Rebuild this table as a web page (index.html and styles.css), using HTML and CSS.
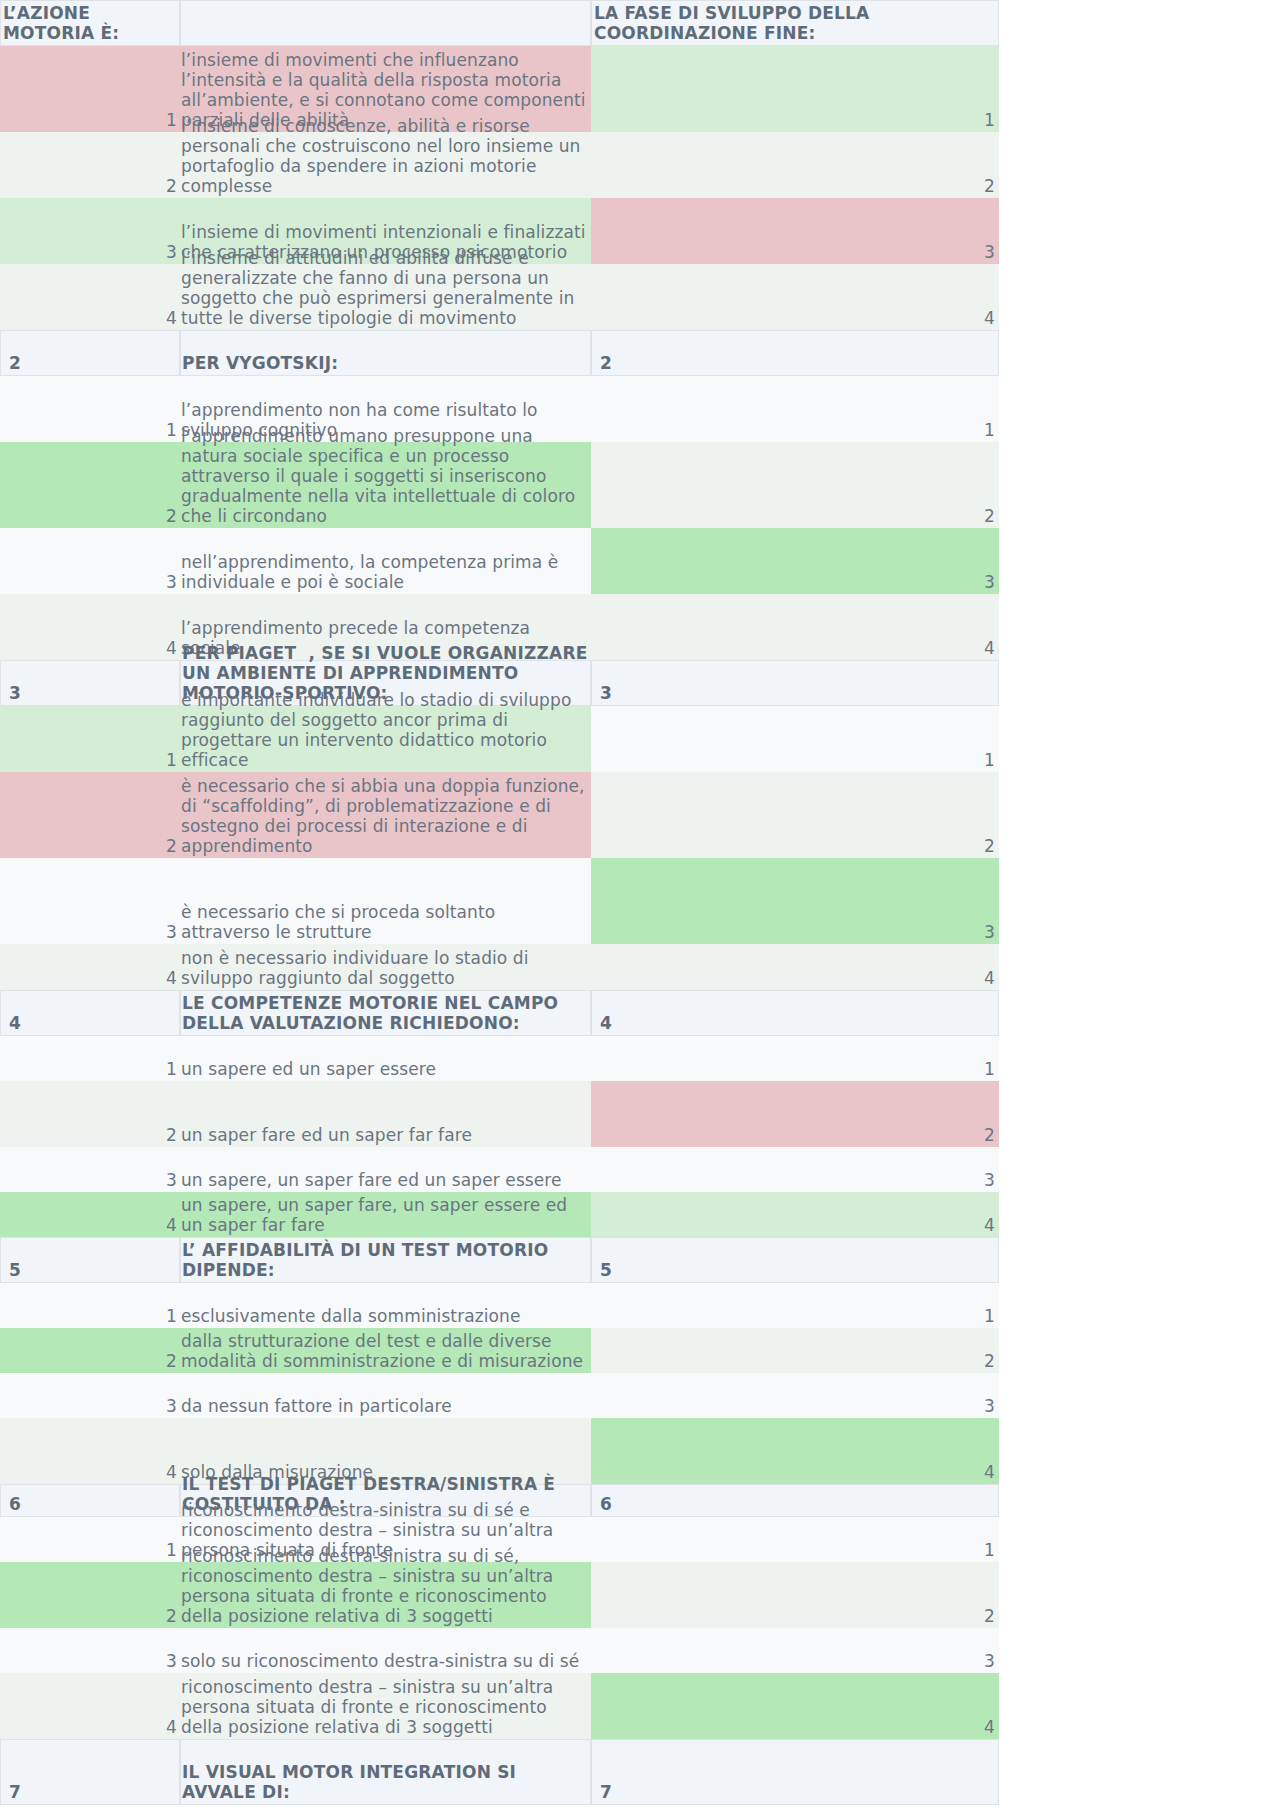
FILE: index.html
```html
<!DOCTYPE html>
<html lang="it">
<head>
<meta charset="utf-8">
<title>Quiz</title>
<link rel="stylesheet" href="styles.css">
</head>
<body>
<div class="sheet">

  <div class="row head h46">
    <div class="cell c1"><div>L’AZIONE MOTORIA È:</div></div>
    <div class="cell c2"><div></div></div>
    <div class="cell c3"><div>LA FASE DI SVILUPPO DELLA COORDINAZIONE FINE:</div></div>
  </div>
  <div class="row odd h86">
    <div class="cell c1 num red"><div>1</div></div>
    <div class="cell c2 txt red"><div>l’insieme di movimenti che influenzano l’intensità e la qualità della risposta motoria all’ambiente, e si connotano come componenti parziali delle abilità</div></div>
    <div class="cell c3 end lgreen"><div>1</div></div>
  </div>
  <div class="row even h66">
    <div class="cell c1 num"><div>2</div></div>
    <div class="cell c2 txt"><div>l’insieme di conoscenze, abilità e risorse personali che costruiscono nel loro insieme un portafoglio da spendere in azioni motorie complesse</div></div>
    <div class="cell c3 end"><div>2</div></div>
  </div>
  <div class="row odd h66">
    <div class="cell c1 num lgreen"><div>3</div></div>
    <div class="cell c2 txt lgreen"><div>l’insieme di movimenti intenzionali e finalizzati che caratterizzano un processo psicomotorio</div></div>
    <div class="cell c3 end red"><div>3</div></div>
  </div>
  <div class="row even h66">
    <div class="cell c1 num"><div>4</div></div>
    <div class="cell c2 txt"><div>l’insieme di attitudini ed abilità diffuse e generalizzate che fanno di una persona un soggetto che può esprimersi generalmente in tutte le diverse tipologie di movimento</div></div>
    <div class="cell c3 end"><div>4</div></div>
  </div>

  <div class="row head h46">
    <div class="cell c1 hn"><div>2</div></div>
    <div class="cell c2"><div>PER VYGOTSKIJ:</div></div>
    <div class="cell c3 hn"><div>2</div></div>
  </div>
  <div class="row odd h66">
    <div class="cell c1 num"><div>1</div></div>
    <div class="cell c2 txt"><div>l’apprendimento non ha come risultato lo sviluppo cognitivo</div></div>
    <div class="cell c3 end"><div>1</div></div>
  </div>
  <div class="row even h86">
    <div class="cell c1 num sgreen"><div>2</div></div>
    <div class="cell c2 txt sgreen"><div>l’apprendimento umano presuppone una natura sociale specifica e un processo attraverso il quale i soggetti si inseriscono gradualmente nella vita intellettuale di coloro che li circondano</div></div>
    <div class="cell c3 end"><div>2</div></div>
  </div>
  <div class="row odd h66">
    <div class="cell c1 num"><div>3</div></div>
    <div class="cell c2 txt"><div>nell’apprendimento, la competenza prima è individuale e poi è sociale</div></div>
    <div class="cell c3 end sgreen"><div>3</div></div>
  </div>
  <div class="row even h66">
    <div class="cell c1 num"><div>4</div></div>
    <div class="cell c2 txt"><div>l’apprendimento precede la competenza sociale</div></div>
    <div class="cell c3 end"><div>4</div></div>
  </div>

  <div class="row head h46">
    <div class="cell c1 hn"><div>3</div></div>
    <div class="cell c2"><div>PER PIAGET&nbsp; , SE SI VUOLE ORGANIZZARE UN AMBIENTE DI APPRENDIMENTO MOTORIO-SPORTIVO:</div></div>
    <div class="cell c3 hn"><div>3</div></div>
  </div>
  <div class="row odd h66">
    <div class="cell c1 num lgreen"><div>1</div></div>
    <div class="cell c2 txt lgreen"><div>è importante individuare lo stadio di sviluppo raggiunto del soggetto ancor prima di progettare un intervento didattico motorio efficace</div></div>
    <div class="cell c3 end"><div>1</div></div>
  </div>
  <div class="row even h86">
    <div class="cell c1 num red"><div>2</div></div>
    <div class="cell c2 txt red"><div>è necessario che si abbia una doppia funzione, di “scaffolding”, di problematizzazione e di sostegno dei processi di interazione e di apprendimento</div></div>
    <div class="cell c3 end"><div>2</div></div>
  </div>
  <div class="row odd h86">
    <div class="cell c1 num"><div>3</div></div>
    <div class="cell c2 txt"><div>è necessario che si proceda soltanto<br>attraverso le strutture</div></div>
    <div class="cell c3 end sgreen"><div>3</div></div>
  </div>
  <div class="row even h46">
    <div class="cell c1 num"><div>4</div></div>
    <div class="cell c2 txt"><div>non è necessario individuare lo stadio di sviluppo raggiunto dal soggetto</div></div>
    <div class="cell c3 end"><div>4</div></div>
  </div>

  <div class="row head h46">
    <div class="cell c1 hn"><div>4</div></div>
    <div class="cell c2"><div>LE COMPETENZE MOTORIE NEL CAMPO DELLA VALUTAZIONE RICHIEDONO:</div></div>
    <div class="cell c3 hn"><div>4</div></div>
  </div>
  <div class="row odd h45">
    <div class="cell c1 num"><div>1</div></div>
    <div class="cell c2 txt"><div>un sapere ed un saper essere</div></div>
    <div class="cell c3 end"><div>1</div></div>
  </div>
  <div class="row even h66">
    <div class="cell c1 num"><div>2</div></div>
    <div class="cell c2 txt"><div>un saper fare ed un saper far fare</div></div>
    <div class="cell c3 end red"><div>2</div></div>
  </div>
  <div class="row odd h45">
    <div class="cell c1 num"><div>3</div></div>
    <div class="cell c2 txt"><div>un sapere, un saper fare ed un saper essere</div></div>
    <div class="cell c3 end"><div>3</div></div>
  </div>
  <div class="row even h45">
    <div class="cell c1 num sgreen"><div>4</div></div>
    <div class="cell c2 txt sgreen"><div>un sapere, un saper fare, un saper essere ed un saper far fare</div></div>
    <div class="cell c3 end lgreen"><div>4</div></div>
  </div>

  <div class="row head h46">
    <div class="cell c1 hn"><div>5</div></div>
    <div class="cell c2"><div>L’ AFFIDABILITÀ DI UN TEST MOTORIO DIPENDE:</div></div>
    <div class="cell c3 hn"><div>5</div></div>
  </div>
  <div class="row odd h45">
    <div class="cell c1 num"><div>1</div></div>
    <div class="cell c2 txt"><div>esclusivamente dalla somministrazione</div></div>
    <div class="cell c3 end"><div>1</div></div>
  </div>
  <div class="row even h45">
    <div class="cell c1 num sgreen"><div>2</div></div>
    <div class="cell c2 txt sgreen"><div>dalla strutturazione del test e dalle diverse modalità di somministrazione e di misurazione</div></div>
    <div class="cell c3 end"><div>2</div></div>
  </div>
  <div class="row odd h45">
    <div class="cell c1 num"><div>3</div></div>
    <div class="cell c2 txt"><div>da nessun fattore in particolare</div></div>
    <div class="cell c3 end"><div>3</div></div>
  </div>
  <div class="row even h66">
    <div class="cell c1 num"><div>4</div></div>
    <div class="cell c2 txt"><div>solo dalla misurazione</div></div>
    <div class="cell c3 end sgreen"><div>4</div></div>
  </div>

  <div class="row head h33">
    <div class="cell c1 hn"><div>6</div></div>
    <div class="cell c2"><div>IL TEST DI PIAGET DESTRA/SINISTRA È COSTITUITO DA :</div></div>
    <div class="cell c3 hn"><div>6</div></div>
  </div>
  <div class="row odd h45">
    <div class="cell c1 num"><div>1</div></div>
    <div class="cell c2 txt"><div>riconoscimento destra-sinistra su di sé e riconoscimento destra – sinistra su un’altra persona situata di fronte</div></div>
    <div class="cell c3 end"><div>1</div></div>
  </div>
  <div class="row even h66">
    <div class="cell c1 num sgreen"><div>2</div></div>
    <div class="cell c2 txt sgreen"><div>riconoscimento destra-sinistra su di sé, riconoscimento destra – sinistra su un’altra persona situata di fronte e riconoscimento della posizione relativa di 3 soggetti</div></div>
    <div class="cell c3 end"><div>2</div></div>
  </div>
  <div class="row odd h45">
    <div class="cell c1 num"><div>3</div></div>
    <div class="cell c2 txt"><div>solo su riconoscimento destra-sinistra su di sé</div></div>
    <div class="cell c3 end"><div>3</div></div>
  </div>
  <div class="row even h66">
    <div class="cell c1 num"><div>4</div></div>
    <div class="cell c2 txt"><div>riconoscimento destra – sinistra su un’altra persona situata di fronte e riconoscimento della posizione relativa di 3 soggetti</div></div>
    <div class="cell c3 end sgreen"><div>4</div></div>
  </div>

  <div class="row head h66">
    <div class="cell c1 hn"><div>7</div></div>
    <div class="cell c2"><div>IL VISUAL MOTOR INTEGRATION SI AVVALE DI:</div></div>
    <div class="cell c3 hn"><div>7</div></div>
  </div>

</div>
</body>
</html>
```

FILE: styles.css
```css
html, body {
  margin: 0;
  padding: 0;
  background: #ffffff;
}

body {
  font-family: "DejaVu Sans", sans-serif;
  font-size: 17px;
  line-height: 20px;
  letter-spacing: 0.1px;
  color: #6a7581;
}

.sheet {
  width: 999px;
}

.row {
  display: flex;
  box-sizing: border-box;
}

.h33 { height: 33px; }
.h45 { height: 45px; }
.h46 { height: 46px; }
.h66 { height: 66px; }
.h86 { height: 86px; }

.cell {
  box-sizing: border-box;
  display: flex;
  flex-direction: column;
  justify-content: flex-end;
  padding: 3px 3px 2px 3px;
  min-width: 0;
}

.c1 { width: 180px; flex: none; }
.c2 { width: 411px; flex: none; }
.c3 { width: 408px; flex: none; }

.odd .cell { background: #f8f9fb; }
.even .cell { background: #eff3ef; }

.num {
  text-align: right;
  padding-right: 3px;
}

.txt {
  padding-left: 1px;
  padding-right: 2px;
}

.end {
  text-align: right;
  padding-right: 4px;
}

.row .red { background: #e9c5ca; }
.row .lgreen { background: #d3eed5; }
.row .sgreen { background: #b4e8b7; }

.head .cell {
  background: #f1f4f8;
  border: 1px solid #dfe3e8;
  padding: 0 2px 2px 2px;
  font-weight: bold;
  letter-spacing: 0.2px;
  color: #5e6c79;
}

.head .c2 {
  padding-left: 1px;
}

.head .hn {
  padding-left: 8px;
}
```
